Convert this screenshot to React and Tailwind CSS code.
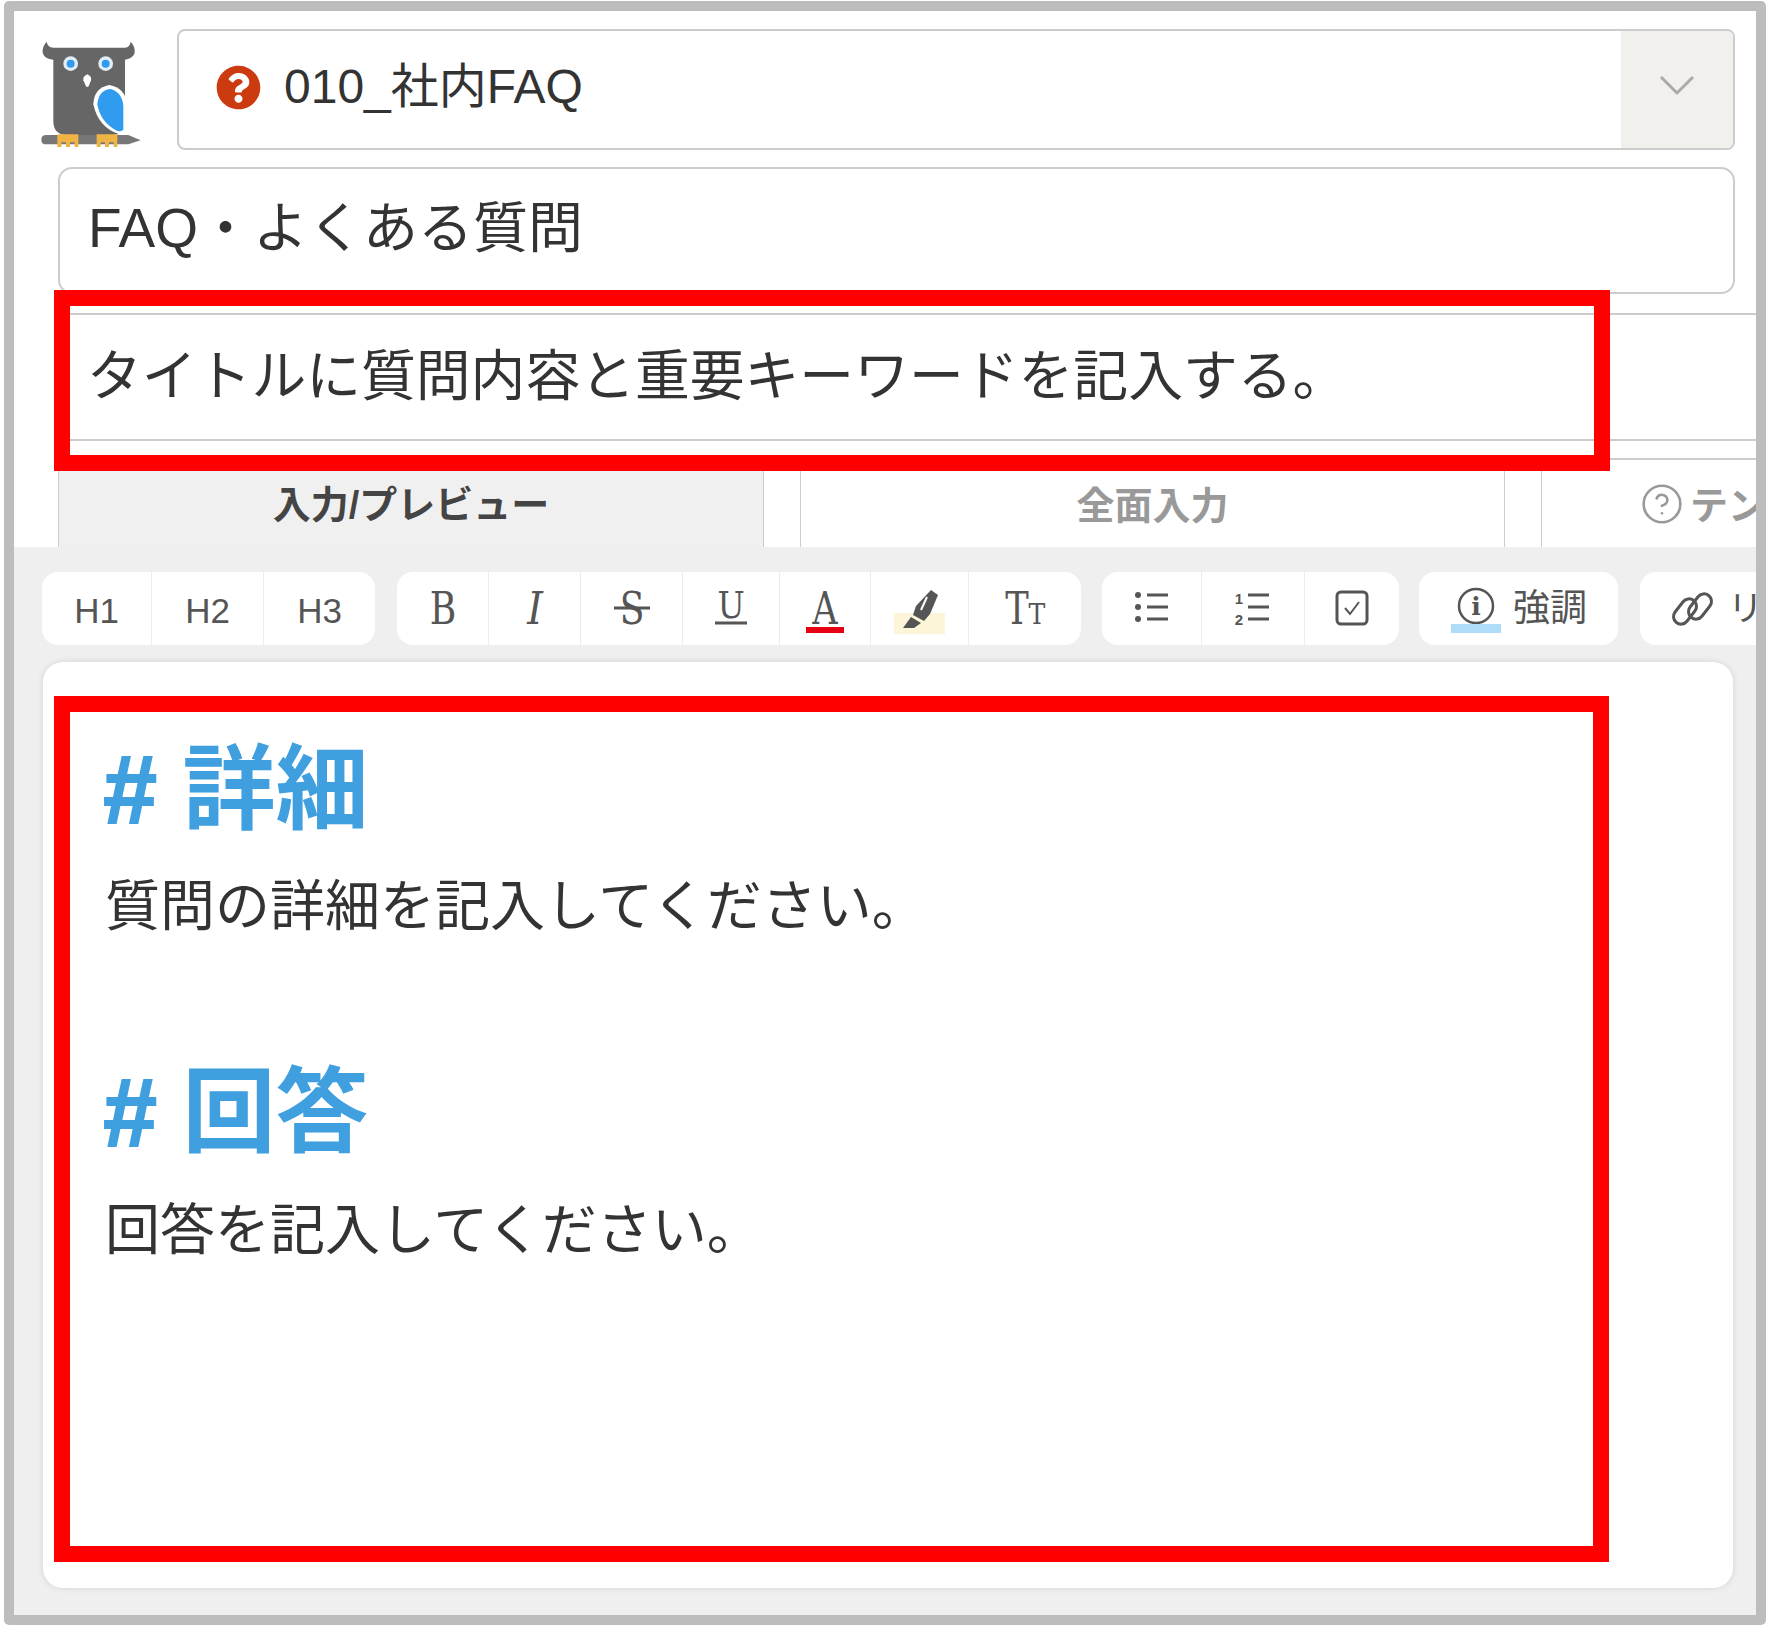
import React from 'react';
import { CircleHelp } from 'lucide-react';
import { FaQuestionCircle } from 'react-icons/fa';

const ICON = '#555';
const SLAB = { fontFamily: "'DejaVu Serif', serif" };

const Owl = () => (
  <svg viewBox="24 54 315 330" className="w-[105px] h-[110px] shrink-0 ml-6 mt-2">
    <path d="M70 80 Q52 78 50 62 Q36 76 38 96 Q44 114 70 116 L70 300 Q70 342 112 342 L245 342 Q285 342 285 300 L285 116 Q310 112 314 96 Q316 76 302 62 Q300 78 285 80 Z" fill="#666" />
    <circle cx="122" cy="128" r="22" fill="#e4eef6" />
    <circle cx="122" cy="128" r="12" fill="#2f9cf0" />
    <circle cx="227" cy="128" r="22" fill="#e4eef6" />
    <circle cx="227" cy="128" r="12" fill="#2f9cf0" />
    <path d="M172 160 Q186 166 183 178 L176 196 Q172 200 168 196 L160 178 Q158 166 172 160 Z" fill="#fff" />
    <path d="M238 192 Q285 200 292 250 L292 340 L268 340 Q205 320 190 250 Q192 200 238 192 Z" fill="#fff" />
    <path d="M240 204 Q276 212 280 255 L280 326 Q272 332 262 330 Q212 306 202 250 Q206 208 240 204 Z" fill="#2f9cf0" />
    <path d="M48 342 L295 342 L332 358 L295 370 L48 370 Q34 370 34 356 Q34 342 48 342 Z" fill="#777" />
    <path d="M82 340 H145 V378 H134 V364 H120 V378 H108 V364 H94 V378 H82 Z" fill="#f0b445" />
    <path d="M200 340 H262 V378 H251 V364 H237 V378 H225 V364 H212 V378 H200 Z" fill="#f0b445" />
  </svg>
);

const Cell = ({ w, last, children }) => (
  <div className={`h-full flex items-center justify-center shrink-0 ${last ? '' : 'border-r border-[#ececec]'}`} style={{ width: w }}>
    {children}
  </div>
);

const Group = ({ children }) => (
  <div className="h-full bg-white rounded-[16px] flex shrink-0 overflow-hidden">{children}</div>
);

const Glyph = ({ children, w = 50 }) => (
  <svg width={w} height="50" viewBox={`0 0 ${w} 50`}>{children}</svg>
);

// letter icons: squeezed slab serif, x is the centre of the letter
const Letter = ({ x, y, size = 44, sx = 0.82, italic, children }) => (
  <text
    transform={`translate(${x} ${y}) scale(${sx} 1)`}
    textAnchor="middle"
    fontSize={size}
    fontStyle={italic ? 'italic' : 'normal'}
    fill={ICON}
    style={SLAB}
  >
    {children}
  </text>
);

const HCell = ({ w, last, label }) => (
  <Cell w={w} last={last}>
    <span className="text-[35px] text-[#555] leading-none mt-[3px]">{label}</span>
  </Cell>
);

const Toolbar = () => (
  <div className="flex h-[73px] pl-7">
    <Group>
      <HCell w={110} label="H1" />
      <HCell w={112} label="H2" />
      <HCell w={111} last label="H3" />
    </Group>
    <div className="ml-[22px]">
      <Group>
        <Cell w={92}>
          <Glyph><Letter x={25} y={40}>B</Letter></Glyph>
        </Cell>
        <Cell w={92}>
          <Glyph><Letter x={25} y={40} sx={0.9} italic>I</Letter></Glyph>
        </Cell>
        <Cell w={102}>
          <Glyph>
            <Letter x={25} y={40}>S</Letter>
            <line x1="7" y1="24" x2="43" y2="24" stroke={ICON} strokeWidth="3" />
          </Glyph>
        </Cell>
        <Cell w={97}>
          <Glyph>
            <Letter x={25} y={34} size={38} sx={0.85}>U</Letter>
            <line x1="9" y1="39" x2="41" y2="39" stroke={ICON} strokeWidth="3" />
          </Glyph>
        </Cell>
        <Cell w={91}>
          <Glyph>
            <Letter x={25} y={40} sx={0.8}>A</Letter>
            <rect x="6" y="43" width="38" height="6" fill="#e60012" />
          </Glyph>
        </Cell>
        <Cell w={98}>
          <svg width="52" height="50" viewBox="0 0 52 50">
            <rect x="0" y="29" width="51" height="21" fill="#fdf5d8" />
            <path d="M37 6 L44 11 L36 30 L30 37 L19 31 L22 22 Z" fill={ICON} />
            <path d="M17 33 L27 39 L20 44 L9 44 Z" fill={ICON} />
            <path d="M33 13 L27 26" stroke="#fff" strokeWidth="2" />
          </svg>
        </Cell>
        <Cell w={112} last>
          <Glyph>
            <Letter x={17} y={40} sx={0.8}>T</Letter>
            <Letter x={37} y={40} size={28} sx={0.9}>T</Letter>
          </Glyph>
        </Cell>
      </Group>
    </div>
    <div className="ml-[21px]">
      <Group>
        <Cell w={100}>
          <Glyph>
            {[11, 23, 35].map((y) => (
              <g key={y}>
                <circle cx="11" cy={y} r="3" fill={ICON} />
                <line x1="20" y1={y} x2="41" y2={y} stroke={ICON} strokeWidth="3" />
              </g>
            ))}
          </Glyph>
        </Cell>
        <Cell w={103}>
          <Glyph>
            <text x="11" y="20" textAnchor="middle" fontSize="15" fontWeight="700" fill={ICON}>1</text>
            <text x="11" y="41" textAnchor="middle" fontSize="15" fontWeight="700" fill={ICON}>2</text>
            {[11, 23, 35].map((y) => (
              <line key={y} x1="20" y1={y} x2="41" y2={y} stroke={ICON} strokeWidth="3" />
            ))}
          </Glyph>
        </Cell>
        <Cell w={94} last>
          <Glyph>
            <rect x="10" y="8" width="30" height="32" rx="4" fill="none" stroke={ICON} strokeWidth="3" />
            <path d="M18 24 L23 30 L32 18" fill="none" stroke={ICON} strokeWidth="2" />
          </Glyph>
        </Cell>
      </Group>
    </div>
    <div className="ml-5">
      <Group>
        <div className="w-[199px] h-full flex items-center pl-[32px]">
          <svg width="50" height="50" viewBox="0 0 50 50" className="shrink-0">
            <circle cx="25" cy="22" r="17" fill="none" stroke={ICON} strokeWidth="2.5" />
            <text x="25" y="31" textAnchor="middle" fontSize="25" fontWeight="700" fill={ICON} style={SLAB}>i</text>
            <rect x="0" y="40" width="50" height="9" fill="#aedcf9" />
          </svg>
          <span className="ml-[12px] text-[37px] text-[#555] leading-none whitespace-nowrap">強調</span>
        </div>
      </Group>
    </div>
    <div className="ml-[22px]">
      <Group>
        <div className="w-[200px] h-full flex items-center pl-[28px]">
          <svg width="50" height="44" viewBox="0 0 50 44" className="shrink-0">
            <rect x="3" y="17" width="28" height="15" rx="7.5" transform="rotate(-52 17 24.5)" fill="none" stroke={ICON} strokeWidth="3" />
            <rect x="18" y="12" width="28" height="15" rx="7.5" transform="rotate(-52 32 19.5)" fill="none" stroke={ICON} strokeWidth="3" />
          </svg>
          <span className="ml-[10px] text-[35px] text-[#555] leading-none whitespace-nowrap">リンク</span>
        </div>
      </Group>
    </div>
  </div>
);

const Heading = ({ className, children }) => (
  <div className={`flex items-center h-[88px] -ml-[3px] text-[#409fdf] font-bold text-[93px] leading-none ${className}`}>
    <span className="italic mr-[27px] text-[96px] [-webkit-text-stroke:2px_#409fdf]">#</span>
    <span>{children}</span>
  </div>
);

const App = () => (
  <div className="bg-white w-[1769px] h-[1627px] pl-1 pt-px text-[#333] [font-family:'Liberation_Sans','Noto_Sans_CJK_JP',sans-serif]">
    <div className="relative w-[1762px] h-[1624px] border-[10px] border-[#bdbdbd] rounded-[5px] bg-white overflow-hidden flex flex-col">
      <div className="flex items-center pt-[18px] pr-[21px]">
        <Owl />
        <div className="ml-[34px] flex-1 h-[121px] border-2 border-[#ccc] rounded-[8px] flex items-center overflow-hidden">
          <FaQuestionCircle size={45} color="#cc3a10" className="ml-[37px] shrink-0 -mt-[5px]" />
          <span className="ml-[23px] text-[48px] leading-none -mt-[5px]">010_社内FAQ</span>
          <div className="ml-auto w-[112px] h-full bg-[#f1f0ec] flex items-center justify-center">
            <svg width="36" height="22" viewBox="0 0 36 22" className="-mt-[9px]">
              <path d="M2 3 L18 19 L34 3" fill="none" stroke="#aaa" strokeWidth="3" />
            </svg>
          </div>
        </div>
      </div>

      <div className="ml-11 mr-[21px] mt-[17px] h-[127px] border-2 border-[#ccc] rounded-[14px] flex items-center pl-[28px] text-[55px] leading-none shrink-0">
        <span className="-mt-[4px]">FAQ・よくある質問</span>
      </div>

      <div className="ml-11 mt-[19px] h-[128px] border-y-2 border-[#ccc] flex items-center pl-[29px] text-[54.8px] leading-none shrink-0 whitespace-nowrap">
        <span className="-mt-[2px]">タイトルに質問内容と重要キーワードを記入する。</span>
      </div>

      <div className="flex pl-11 mt-[17px] h-[89px] shrink-0">
        <div className="w-[706px] shrink-0 bg-[#f0f0f0] border-x border-[#ccc] flex items-center justify-center text-[38px] font-bold text-[#444] leading-none">
          <span className="mt-[4px]">入力/プレビュー</span>
        </div>
        <div className="w-[705px] ml-9 shrink-0 border-x border-t-2 border-[#ccc] flex items-center justify-center text-[38px] font-bold text-[#999] leading-none">
          <span className="mt-[4px]">全面入力</span>
        </div>
        <div className="w-[707px] ml-9 shrink-0 border-x border-t-2 border-[#ccc] flex items-center pl-[98px] text-[38px] font-bold text-[#999] leading-none whitespace-nowrap">
          <CircleHelp size={44} strokeWidth={1.4} color="#999" />
          <span className="ml-[6px] mt-[4px]">テンプレート</span>
        </div>
      </div>

      <div className="flex-1 bg-[#efefef] pt-[25px]">
        <Toolbar />
        <div className="ml-[29px] mt-[17px] w-[1690px] h-[926px] bg-white rounded-[20px] shadow-[0_0_6px_rgba(0,0,0,0.12)] pl-[62px] pt-[84px]">
          <Heading>詳細</Heading>
          <p className="mt-[40px] text-[55px] leading-[64px]">質問の詳細を記入してください。</p>
          <Heading className="mt-[131px]">回答</Heading>
          <p className="mt-[41px] text-[55px] leading-[64px]">回答を記入してください。</p>
        </div>
      </div>

      <div className="absolute left-10 top-[279px] w-[1556px] h-[181px] border-[16px] border-[#ff0000]" />
      <div className="absolute left-10 top-[685px] w-[1555px] h-[866px] border-[16px] border-[#ff0000]" />
    </div>
  </div>
);

export default App;
